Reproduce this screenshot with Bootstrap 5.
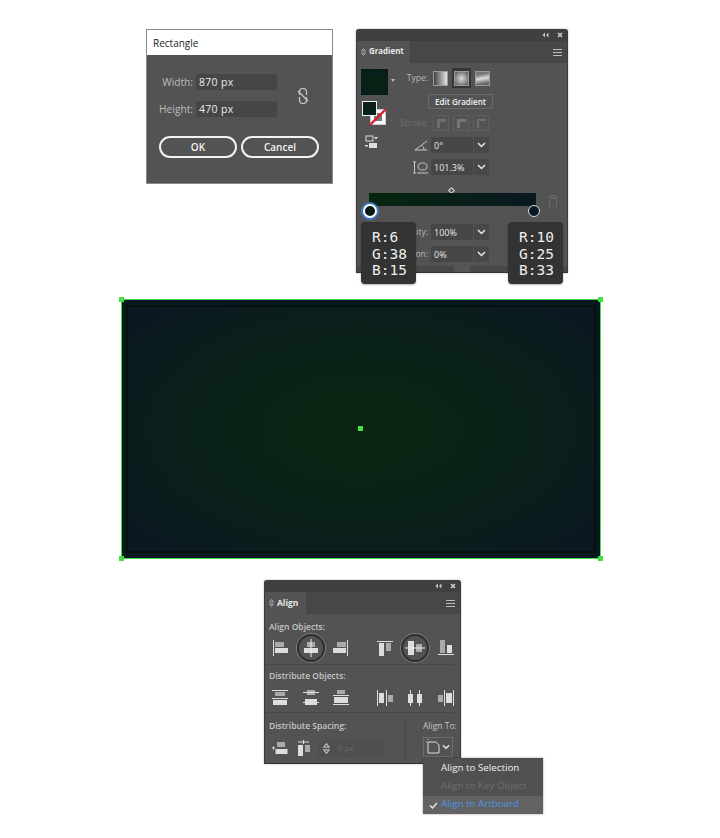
<!DOCTYPE html>
<html lang="en">
<head>
    <meta charset="UTF-8">
    <title>Rectangle, Gradient and Align panels</title>
    <link href="https://cdn.jsdelivr.net/npm/bootstrap@5.3.2/dist/css/bootstrap.min.css" rel="stylesheet">
    <style>
        body { background: #fff; margin: 0; font-family: "Open Sans", "Liberation Sans", sans-serif; }
        .stage { position: relative; width: 720px; height: 838px; overflow: hidden; }
        .win { position: absolute; background: #535353; color: #d4d4d4; font-size: 9px; line-height: 1; }

        /* Rectangle dialog */
        .rect-dlg { left: 146px; top: 29px; width: 187px; height: 155px; border: 1px solid #8a8a8a; }
        .rect-title { height: 25px; background: #fff; color: #222; font-size: 10px; padding-left: 6px; }
        .rect-body { padding: 19px 12px 0 12px; }
        .rect-fields { width: 118px; gap: 11px; }
        .rect-lbl { width: 34px; text-align: right; font-size: 10.2px; color: #bdbdbd; margin-right: 3px; flex: none; }
        .rect-input { width: 81px; height: 16px; background: #464646; color: #ececec; font-size: 10.5px; padding: 0 3px; letter-spacing: .3px; border-radius: 1px; }
        .rect-link { margin: 0 0 0 20px; }
        .rect-btns { gap: 4px; margin-top: 19px; }
        .btn.rect-btn { width: 78px; height: 22px; padding: 0; border: 2px solid #f2f2f2; border-radius: 11px; color: #f2f2f2; font-size: 10px; font-weight: 600; line-height: 1; background: #535353; }

        /* panel chrome */
        .pnl { border-left: 1px solid #3c3c3c; border-right: 1px solid #3c3c3c; border-radius: 3px 3px 0 0; box-shadow: 0 0 2px rgba(0,0,0,.35); }
        .pnl-top { height: 12px; background: #404040; border-radius: 3px 3px 0 0; color: #c8c8c8; gap: 8px; padding-right: 4px; }
        .pnl-tabs { height: 22px; background: #474747; padding-right: 5px; }
        .pnl-tab { height: 22px; background: #535353; color: #e6e6e6; font-weight: 700; font-size: 8.5px; padding-left: 4px; gap: 3px; }
        .grad-tab { font-size: 7.9px; width: 53px; }
        .burger { width: 9px; height: 7px; border-top: 1px solid #bbb; border-bottom: 1px solid #bbb; position: relative; }
        .burger::after { content: ""; position: absolute; left: 0; right: 0; top: 2px; height: 1px; background: #bbb; }

        /* Gradient panel */
        .grad-pnl { left: 356px; top: 29px; width: 212px; height: 244px; border-bottom: 1px solid #333; }
        .grad-main { padding-top: 5px; }
        .grad-left { width: 44px; padding: 1px 0 0 4px; flex: none; }
        .main-swatch { width: 27px; height: 26px; background: radial-gradient(circle, #06260f 0%, #0a1921 100%); }
        .swatch-caret { width: 0; height: 0; border: 2px solid transparent; border-top: 3px solid #bbb; margin: 10px 0 0 3px; }
        .fill-stroke { position: relative; width: 25px; height: 25px; margin-top: 6px; margin-left: 1px; }
        .fs-fill { position: absolute; left: 0; top: 0; width: 15px; height: 15px; background: #0a2119; border: 1px solid #eee; z-index: 1; }
        .fs-stroke { position: absolute; left: 8px; top: 8px; width: 16px; height: 16px; }
        .swap-ico { display: block; margin: 9px 0 0 4px; }
        .grad-right { padding-left: 0; gap: 6px; }
        .grad-row { height: 16px; gap: 5px; }
        .grad-lbl { width: 27px; color: #b8b8b8; font-size: 8.5px; flex: none; white-space: nowrap; }
        .grad-lbl.off { color: #6f6f6f; }
        .type-row { height: 20px; }
        .type-btn { width: 15px; height: 15px; border: 1px solid #999; }
        .type-wrap { width: 19px; height: 20px; }
        .type-wrap.on { background: #363636; }
        .ty-a { background: linear-gradient(90deg, #444, #e6e6e6); }
        .ty-b { background: radial-gradient(circle, #ddd, #555); }
        .ty-c { background: linear-gradient(170deg, #777 20%, #ddd 50%, #666 85%); }
        .btn.edit-btn { width: 65px; height: 15px; margin-left: 27px; padding: 0; background: #535353; border: 1px solid #6b6b6b; border-radius: 1px; color: #f0f0f0; font-size: 8px; font-weight: 600; line-height: 1; }
        .off-btn { width: 16px; height: 16px; border: 1px solid #5f5f5f; }
        .combo { gap: 1px; margin-left: -2px; }
        .combo-val { width: 42px; height: 16px; background: #464646; color: #e8e8e8; font-size: 9px; padding-left: 3px; }
        .combo-arrow { width: 15px; height: 16px; background: #484848; }
        .grad-ramp-wrap { position: relative; margin: 15px 0 0 12px; width: 167px; height: 31px; }
        .ramp-diamond { position: absolute; left: 80px; top: -2px; width: 5px; height: 5px; border: 1px solid #ddd; transform: rotate(45deg); }
        .ramp { position: absolute; left: 0; top: 3px; width: 167px; height: 13px; background: linear-gradient(90deg, #06260f, #0a1921); }
        .stop-a { position: absolute; left: -6px; top: 14px; width: 14px; height: 14px; border-radius: 50%; background: #071a12; border: 2px solid #fff; box-shadow: 0 0 0 2px #3f78c4; }
        .stop-b { position: absolute; left: 159px; top: 15px; width: 12px; height: 12px; border-radius: 50%; background: #0a1921; border: 1px solid #ddd; }
        .trash-ico { position: absolute; left: 179px; top: 5px; }
        .grad-lower { margin-top: 3px; gap: 6px; padding-left: 44px; }
        .grad-foot { position: absolute; left: 0; right: 0; bottom: 0; height: 6px; background: #484848; }
        .grad-foot::after { content: ""; position: absolute; left: 97px; width: 16px; top: 0; height: 6px; background: #555; }
        .rgb-tip { position: absolute; top: 222px; width: 55px; height: 62px; background: #333; border-radius: 4px; color: #eee; font-family: "DejaVu Sans Mono", "Liberation Mono", monospace; font-size: 14.5px; line-height: 16.5px; padding: 7px 0 0 11px; white-space: pre; box-shadow: 0 1px 2px rgba(0,0,0,.3); }
        .tip-a { left: 361px; }
        .tip-b { left: 508px; }

        /* artboard */
        .art { position: absolute; left: 121px; top: 299px; width: 480px; height: 260px; border: 1px solid #45e045; background: #09171e; padding: 5px 4px; }
        .art-inner { width: 100%; height: 100%; border: 2px solid #06120f; background: radial-gradient(ellipse 62% 66% at 50% 50%, #0a2611 0%, #0a2118 55%, #0a1921 100%); }
        .hnd { position: absolute; width: 5px; height: 5px; background: #45e045; }
        .h-tl { left: -3px; top: -3px; } .h-tr { right: -3px; top: -3px; }
        .h-bl { left: -3px; bottom: -3px; } .h-br { right: -3px; bottom: -3px; }
        .h-c { left: 236px; top: 126px; }

        /* Align panel */
        .align-pnl { left: 264px; top: 580px; width: 197px; height: 184px; border-bottom: 1px solid #333; }
        .sect-lbl { color: #c6c6c6; font-size: 8.5px; font-weight: 600; }
        .align-sect { padding: 7px 0 0 4px; margin-right: 5px; border-bottom: 1px solid #484848; }
        .align-sect.first { padding: 9px 0 2px 4px; }
        .ico-row { padding-top: 4px; margin-left: -4px; gap: 13px; }
        .first .ico-row { padding-top: 2px; }
        .ico-group { display: flex; }
        .ico-cell { width: 30.5px; height: 28px; display: flex; align-items: center; justify-content: center; }
        .ring { border-radius: 50%; width: 28px; height: 28px; flex: none; margin: 0 1.25px; border: 2px solid #2f2f2f; box-shadow: 0 0 0 1px #7d7d7d; }
        .spacing-sect { height: 50px; }
        .spacing-l { width: 140px; padding: 9px 0 0 4px; flex: none; }
        .spacing-row { margin: 9px 0 0 3px; }
        .spacing-r { border-left: 1px solid #484848; margin-top: 6px; height: 41px; padding: 3px 0 0 17px; }
        .space-input { width: 65px; height: 17px; background: #4f4f4f; color: #6b6b6b; font-size: 8px; margin-left: 6px; gap: 8px; padding-left: 5px; }
        .to-btn { width: 30px; height: 20px; border: 1px solid #6d6d6d; margin-top: 6px; gap: 1px; }
        .align-menu { position: absolute; left: 423px; top: 758px; width: 120px; height: 56px; padding-top: 1px; background: #505050; box-shadow: 0 0 2px rgba(0,0,0,.4); font-size: 9.8px; color: #f0f0f0; }
        .menu-item { height: 18.33px; padding-left: 18px; position: relative; }
        .menu-item.dim { color: #6e6e6e; }
        .menu-item.cur { background: #626262; color: #4b96e6; }
        .menu-check { position: absolute; left: 6px; top: 6px; }
    </style>
</head>
<body>
<svg width="0" height="0" class="d-block position-absolute">
    <defs>
        <symbol id="al-left" viewBox="0 0 20 20"><path d="M3.5 2v16" stroke="#ddd"/><rect x="5" y="4" width="9" height="5" fill="#aaa"/><rect x="5" y="10" width="13" height="5" fill="#ddd"/></symbol>
        <symbol id="al-center" viewBox="0 0 20 20"><rect x="6" y="4" width="8" height="5" fill="#aaa"/><rect x="3" y="10" width="14" height="5" fill="#ddd"/><path d="M10 1v18" stroke="#eee"/></symbol>
        <symbol id="al-right" viewBox="0 0 20 20"><path d="M16.5 2v16" stroke="#ddd"/><rect x="6" y="4" width="9" height="5" fill="#aaa"/><rect x="2" y="10" width="13" height="5" fill="#ddd"/></symbol>
        <symbol id="al-top" viewBox="0 0 20 20"><path d="M2 3.5h16" stroke="#ddd"/><rect x="4" y="5" width="5" height="13" fill="#ddd"/><rect x="11" y="5" width="5" height="8" fill="#aaa"/></symbol>
        <symbol id="al-mid" viewBox="0 0 20 20"><rect x="3" y="3" width="6" height="14" fill="#ddd"/><rect x="11" y="6" width="6" height="8" fill="#aaa"/><path d="M0 10h20" stroke="#eee"/></symbol>
        <symbol id="al-bot" viewBox="0 0 20 20"><path d="M2 16.5h16" stroke="#ddd"/><rect x="4" y="2" width="5" height="13" fill="#aaa"/><rect x="11" y="7" width="5" height="8" fill="#ddd"/></symbol>
        <symbol id="di-top" viewBox="0 0 20 20"><path d="M2 2.5h16M2 10.5h16" stroke="#ddd"/><rect x="5" y="4" width="10" height="4" fill="#aaa"/><rect x="3" y="12" width="14" height="5" fill="#ddd"/></symbol>
        <symbol id="di-mid" viewBox="0 0 20 20"><rect x="6" y="2" width="8" height="5" fill="#aaa"/><rect x="4" y="11" width="12" height="6" fill="#ddd"/><path d="M2 4.5h16M2 14.5h16" stroke="#ddd"/></symbol>
        <symbol id="di-bot" viewBox="0 0 20 20"><rect x="6" y="2" width="8" height="4" fill="#aaa"/><rect x="3" y="9" width="14" height="6" fill="#ddd"/><path d="M2 7.5h16M2 16.5h16" stroke="#ddd"/></symbol>
        <symbol id="di-left" viewBox="0 0 20 20"><path d="M2.5 2v16M11.5 2v16" stroke="#ddd"/><rect x="4" y="5" width="5" height="10" fill="#ddd"/><rect x="13" y="7" width="5" height="7" fill="#aaa"/></symbol>
        <symbol id="di-hmid" viewBox="0 0 20 20"><rect x="3" y="6" width="5" height="9" fill="#ddd"/><rect x="12" y="6" width="5" height="9" fill="#ddd"/><path d="M5.5 2v16M14.5 2v16" stroke="#ddd"/></symbol>
        <symbol id="di-right" viewBox="0 0 20 20"><path d="M8.5 2v16M17.5 2v16" stroke="#ddd"/><rect x="2" y="7" width="5" height="7" fill="#aaa"/><rect x="10" y="5" width="6" height="10" fill="#ddd"/></symbol>
        <symbol id="chev" viewBox="0 0 9 6"><path d="M1 1l3.5 3.5L8 1" fill="none" stroke="#e8e8e8" stroke-width="1.5"/></symbol>
        <symbol id="collapse" viewBox="0 0 7 6"><path d="M3 0.5L0.5 3 3 5.5zM6.5 0.5L4 3l2.5 2.5z" fill="#c8c8c8"/></symbol>
        <symbol id="closex" viewBox="0 0 6 6"><path d="M1 1l4 4M5 1l-4 4" stroke="#d0d0d0" stroke-width="1.5"/></symbol>
        <symbol id="updown" viewBox="0 0 5 8"><path d="M2.5 0.5L4.5 3h-4zM2.5 7.5L0.5 5h4z" fill="none" stroke="#bbb" stroke-width=".8"/></symbol>
    </defs>
</svg>

<div class="stage">
    <!-- Rectangle dialog -->
    <div class="win rect-dlg">
        <div class="rect-title d-flex align-items-center">Rectangle</div>
        <div class="rect-body">
            <div class="d-flex align-items-center">
                <div class="rect-fields d-flex flex-column flex-shrink-0">
                    <div class="d-flex align-items-center"><span class="rect-lbl">Width:</span><span class="rect-input d-flex align-items-center">870 px</span></div>
                    <div class="d-flex align-items-center"><span class="rect-lbl">Height:</span><span class="rect-input d-flex align-items-center">470 px</span></div>
                </div>
                <svg class="rect-link" width="12" height="16" viewBox="0 0 12 16"><path d="M2.5 7V4a3.5 3.5 0 0 1 7 0v3M2.5 9v3a3.5 3.5 0 0 0 7 0V9" fill="none" stroke="#c8c8c8" stroke-width="1.2"/><path d="M1 3l10 10" stroke="#c8c8c8" stroke-width="1.2"/></svg>
            </div>
            <div class="rect-btns d-flex">
                <button class="btn rect-btn">OK</button>
                <button class="btn rect-btn">Cancel</button>
            </div>
        </div>
    </div>

    <!-- Gradient panel -->
    <div class="win pnl grad-pnl">
        <div class="pnl-top d-flex align-items-center justify-content-end">
            <svg width="7" height="6"><use href="#collapse"/></svg>
            <svg width="6" height="6"><use href="#closex"/></svg>
        </div>
        <div class="pnl-tabs d-flex justify-content-between align-items-center">
            <div class="pnl-tab grad-tab d-flex align-items-center"><svg width="5" height="8"><use href="#updown"/></svg>Gradient</div>
            <span class="burger"></span>
        </div>
        <div class="grad-main d-flex">
            <div class="grad-left">
                <div class="d-flex">
                    <div class="main-swatch"></div>
                    <div class="swatch-caret"></div>
                </div>
                <div class="fill-stroke">
                    <div class="fs-fill"></div>
                    <svg class="fs-stroke" viewBox="0 0 16 16"><rect x=".5" y=".5" width="15" height="15" fill="#fff" stroke="#ccc"/><rect x="4" y="4" width="8" height="8" fill="#777"/><path d="M0 16L16 0" stroke="#d8232a" stroke-width="2.4"/></svg>
                </div>
                <svg class="swap-ico" width="13" height="13" viewBox="0 0 13 13"><rect x="1" y="1" width="7" height="5" fill="none" stroke="#ddd"/><rect x="4" y="8" width="8" height="5" fill="#ddd"/><path d="M9 2h4l-2 2.5zM0 10h3v1.5H0z" fill="#ddd"/></svg>
            </div>
            <div class="grad-right d-flex flex-column">
                <div class="grad-row type-row d-flex align-items-center">
                    <span class="grad-lbl d-flex justify-content-end">Type:</span>
                    <div class="d-flex align-items-center">
                        <div class="type-wrap d-flex align-items-center"><span class="type-btn ty-a"></span></div>
                        <div class="type-wrap on d-flex align-items-center justify-content-center"><span class="type-btn ty-b"></span></div>
                        <div class="type-wrap d-flex align-items-center justify-content-end"><span class="type-btn ty-c"></span></div>
                    </div>
                </div>
                <button class="btn edit-btn">Edit Gradient</button>
                <div class="grad-row d-flex align-items-center">
                    <span class="grad-lbl off d-flex justify-content-end">Stroke:</span>
                    <div class="d-flex gap-1">
                        <span class="off-btn d-flex align-items-center justify-content-center"><svg width="10" height="10"><path d="M1 10V1h9v3H4v6z" fill="#6d6d6d"/></svg></span>
                        <span class="off-btn d-flex align-items-center justify-content-center"><svg width="10" height="10"><path d="M1 10V1h9v3H4v6z" fill="#767676"/></svg></span>
                        <span class="off-btn d-flex align-items-center justify-content-center"><svg width="10" height="10"><path d="M1 10V1h9v2H3v7z" fill="#6d6d6d"/></svg></span>
                    </div>
                </div>
                <div class="grad-row d-flex align-items-center">
                    <span class="grad-lbl d-flex justify-content-end"><svg width="14" height="11" viewBox="0 0 14 11"><path d="M13 1L1 10h12M8 5.5a5 5 0 0 1 2 4.5" fill="none" stroke="#c8c8c8"/></svg></span>
                    <div class="combo d-flex"><span class="combo-val d-flex align-items-center">0°</span><span class="combo-arrow d-flex align-items-center justify-content-center"><svg width="9" height="6"><use href="#chev"/></svg></span></div>
                </div>
                <div class="grad-row d-flex align-items-center">
                    <span class="grad-lbl d-flex justify-content-end"><svg width="15" height="13" viewBox="0 0 15 13"><path d="M1.5 1v11M0 1h3M0 12h3" fill="none" stroke="#c8c8c8"/><ellipse cx="9.5" cy="5.5" rx="4.5" ry="3.5" fill="none" stroke="#c8c8c8"/><path d="M4 12h11" stroke="#c8c8c8"/></svg></span>
                    <div class="combo d-flex"><span class="combo-val d-flex align-items-center">101.3%</span><span class="combo-arrow d-flex align-items-center justify-content-center"><svg width="9" height="6"><use href="#chev"/></svg></span></div>
                </div>
            </div>
        </div>
        <div class="grad-ramp-wrap">
            <span class="ramp-diamond"></span>
            <div class="ramp"></div>
            <span class="stop-a"></span>
            <span class="stop-b"></span>
            <svg class="trash-ico" width="10" height="12" viewBox="0 0 10 12"><path d="M0 2h10M3 2V0.5h4V2M1.5 3.5h7V12h-7z" fill="none" stroke="#6b6b6b"/></svg>
        </div>
        <div class="grad-lower d-flex flex-column">
            <div class="grad-row d-flex align-items-center">
                <span class="grad-lbl d-flex justify-content-end">Opacity:</span>
                <div class="combo d-flex"><span class="combo-val d-flex align-items-center">100%</span><span class="combo-arrow d-flex align-items-center justify-content-center"><svg width="9" height="6"><use href="#chev"/></svg></span></div>
            </div>
            <div class="grad-row d-flex align-items-center">
                <span class="grad-lbl d-flex justify-content-end">Location:</span>
                <div class="combo d-flex"><span class="combo-val d-flex align-items-center">0%</span><span class="combo-arrow d-flex align-items-center justify-content-center"><svg width="9" height="6"><use href="#chev"/></svg></span></div>
            </div>
        </div>
        <div class="grad-foot"></div>
    </div>
    <div class="rgb-tip tip-a">R:6
G:38
B:15</div>
    <div class="rgb-tip tip-b">R:10
G:25
B:33</div>

    <!-- Artboard with selected rectangle -->
    <div class="art">
        <div class="art-inner"></div>
        <span class="hnd h-tl"></span><span class="hnd h-tr"></span>
        <span class="hnd h-bl"></span><span class="hnd h-br"></span>
        <span class="hnd h-c"></span>
    </div>

    <!-- Align panel -->
    <div class="win pnl align-pnl">
        <div class="pnl-top d-flex align-items-center justify-content-end">
            <svg width="7" height="6"><use href="#collapse"/></svg>
            <svg width="6" height="6"><use href="#closex"/></svg>
        </div>
        <div class="pnl-tabs d-flex justify-content-between align-items-center">
            <div class="pnl-tab d-flex align-items-center pe-2"><svg width="5" height="8"><use href="#updown"/></svg>Align</div>
            <span class="burger"></span>
        </div>
        <div class="align-sect first">
            <div class="sect-lbl">Align Objects:</div>
            <div class="ico-row d-flex">
                <div class="ico-group">
                    <span class="ico-cell"><svg width="20" height="20"><use href="#al-left"/></svg></span>
                    <span class="ico-cell ring"><svg width="20" height="20"><use href="#al-center"/></svg></span>
                    <span class="ico-cell"><svg width="20" height="20"><use href="#al-right"/></svg></span>
                </div>
                <div class="ico-group">
                    <span class="ico-cell"><svg width="20" height="20"><use href="#al-top"/></svg></span>
                    <span class="ico-cell ring"><svg width="20" height="20"><use href="#al-mid"/></svg></span>
                    <span class="ico-cell"><svg width="20" height="20"><use href="#al-bot"/></svg></span>
                </div>
            </div>
        </div>
        <div class="align-sect">
            <div class="sect-lbl">Distribute Objects:</div>
            <div class="ico-row d-flex">
                <div class="ico-group">
                    <span class="ico-cell"><svg width="20" height="20"><use href="#di-top"/></svg></span>
                    <span class="ico-cell"><svg width="20" height="20"><use href="#di-mid"/></svg></span>
                    <span class="ico-cell"><svg width="20" height="20"><use href="#di-bot"/></svg></span>
                </div>
                <div class="ico-group">
                    <span class="ico-cell"><svg width="20" height="20"><use href="#di-left"/></svg></span>
                    <span class="ico-cell"><svg width="20" height="20"><use href="#di-hmid"/></svg></span>
                    <span class="ico-cell"><svg width="20" height="20"><use href="#di-right"/></svg></span>
                </div>
            </div>
        </div>
        <div class="spacing-sect d-flex">
            <div class="spacing-l">
                <div class="sect-lbl">Distribute Spacing:</div>
                <div class="spacing-row d-flex align-items-center">
                    <svg width="16" height="14" viewBox="0 0 16 14"><path d="M0 7h3M1.5 5.5v3" stroke="#ddd"/><rect x="5" y="1" width="8" height="5" fill="#aaa"/><rect x="3.5" y="8" width="12" height="5" fill="#ddd"/></svg>
                    <svg class="ms-2" width="16" height="16" viewBox="0 0 16 16"><path d="M2 2h11" stroke="#ddd"/><path d="M7.5 0v4" stroke="#ddd"/><rect x="2" y="5" width="5" height="11" fill="#ddd"/><rect x="9" y="5" width="5" height="7" fill="#aaa"/></svg>
                    <span class="space-input d-flex align-items-center"><svg width="7" height="11"><use href="#updown"/></svg>0 px</span>
                </div>
            </div>
            <div class="spacing-r">
                <div class="sect-lbl fw-normal">Align To:</div>
                <div class="to-btn d-flex align-items-center justify-content-center">
                    <svg width="15" height="15" viewBox="0 0 15 15"><path d="M2 3h8l3 3v8H2z" fill="none" stroke="#ddd"/><path d="M0 3h1M2 0v1" stroke="#ddd"/></svg>
                    <svg width="8" height="6"><use href="#chev"/></svg>
                </div>
            </div>
        </div>
    </div>
    <div class="align-menu">
        <div class="menu-item d-flex align-items-center">Align to Selection</div>
        <div class="menu-item dim d-flex align-items-center">Align to Key Object</div>
        <div class="menu-item cur d-flex align-items-center"><svg class="menu-check" width="9" height="7" viewBox="0 0 9 7"><path d="M1 3.5L3.5 6 8 1" fill="none" stroke="#e6e6e6" stroke-width="1.5"/></svg>Align to Artboard</div>
    </div>
</div>
<script src="https://cdn.jsdelivr.net/npm/bootstrap@5.3.2/dist/js/bootstrap.bundle.min.js"></script>
</body>
</html>
